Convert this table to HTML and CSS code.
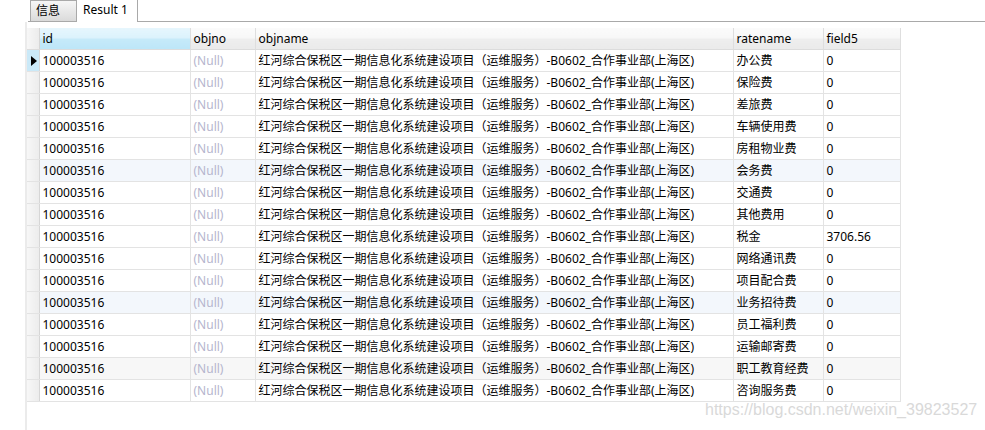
FILE: index.html
```html
<!DOCTYPE html>
<html>
<head>
<meta charset="utf-8">
<link rel="stylesheet" href="styles.css">
</head>
<body>
<div class="app">
  <div class="gutter"></div>
  <div class="main">
    <div class="tabbar">
      <div class="tab tab-info">信息</div>
      <div class="tab tab-active">Result 1</div>
    </div>
    <div class="pane">
      <table class="grid">
        <colgroup>
          <col class="c-ind"><col class="c-id"><col class="c-objno"><col class="c-objname"><col class="c-rate"><col class="c-f5">
        </colgroup>
        <thead>
          <tr>
            <th class="ind"></th>
            <th class="sel">id</th>
            <th>objno</th>
            <th>objname</th>
            <th>ratename</th>
            <th>field5</th>
          </tr>
        </thead>
        <tbody>
          <tr><td class="ind cur"><span class="tri"></span></td><td>100003516</td><td class="null">(Null)</td><td>红河综合保税区一期信息化系统建设项目（运维服务）-B0602_合作事业部(上海区)</td><td>办公费</td><td>0</td></tr>
          <tr><td class="ind"></td><td>100003516</td><td class="null">(Null)</td><td>红河综合保税区一期信息化系统建设项目（运维服务）-B0602_合作事业部(上海区)</td><td>保险费</td><td>0</td></tr>
          <tr><td class="ind"></td><td>100003516</td><td class="null">(Null)</td><td>红河综合保税区一期信息化系统建设项目（运维服务）-B0602_合作事业部(上海区)</td><td>差旅费</td><td>0</td></tr>
          <tr><td class="ind"></td><td>100003516</td><td class="null">(Null)</td><td>红河综合保税区一期信息化系统建设项目（运维服务）-B0602_合作事业部(上海区)</td><td>车辆使用费</td><td>0</td></tr>
          <tr><td class="ind"></td><td>100003516</td><td class="null">(Null)</td><td>红河综合保税区一期信息化系统建设项目（运维服务）-B0602_合作事业部(上海区)</td><td>房租物业费</td><td>0</td></tr>
          <tr class="tint"><td class="ind"></td><td>100003516</td><td class="null">(Null)</td><td>红河综合保税区一期信息化系统建设项目（运维服务）-B0602_合作事业部(上海区)</td><td>会务费</td><td>0</td></tr>
          <tr><td class="ind"></td><td>100003516</td><td class="null">(Null)</td><td>红河综合保税区一期信息化系统建设项目（运维服务）-B0602_合作事业部(上海区)</td><td>交通费</td><td>0</td></tr>
          <tr><td class="ind"></td><td>100003516</td><td class="null">(Null)</td><td>红河综合保税区一期信息化系统建设项目（运维服务）-B0602_合作事业部(上海区)</td><td>其他费用</td><td>0</td></tr>
          <tr><td class="ind"></td><td>100003516</td><td class="null">(Null)</td><td>红河综合保税区一期信息化系统建设项目（运维服务）-B0602_合作事业部(上海区)</td><td>税金</td><td>3706.56</td></tr>
          <tr><td class="ind"></td><td>100003516</td><td class="null">(Null)</td><td>红河综合保税区一期信息化系统建设项目（运维服务）-B0602_合作事业部(上海区)</td><td>网络通讯费</td><td>0</td></tr>
          <tr><td class="ind"></td><td>100003516</td><td class="null">(Null)</td><td>红河综合保税区一期信息化系统建设项目（运维服务）-B0602_合作事业部(上海区)</td><td>项目配合费</td><td>0</td></tr>
          <tr class="tint"><td class="ind"></td><td>100003516</td><td class="null">(Null)</td><td>红河综合保税区一期信息化系统建设项目（运维服务）-B0602_合作事业部(上海区)</td><td>业务招待费</td><td>0</td></tr>
          <tr><td class="ind"></td><td>100003516</td><td class="null">(Null)</td><td>红河综合保税区一期信息化系统建设项目（运维服务）-B0602_合作事业部(上海区)</td><td>员工福利费</td><td>0</td></tr>
          <tr><td class="ind"></td><td>100003516</td><td class="null">(Null)</td><td>红河综合保税区一期信息化系统建设项目（运维服务）-B0602_合作事业部(上海区)</td><td>运输邮寄费</td><td>0</td></tr>
          <tr class="grey"><td class="ind"></td><td>100003516</td><td class="null">(Null)</td><td>红河综合保税区一期信息化系统建设项目（运维服务）-B0602_合作事业部(上海区)</td><td>职工教育经费</td><td>0</td></tr>
          <tr><td class="ind"></td><td>100003516</td><td class="null">(Null)</td><td>红河综合保税区一期信息化系统建设项目（运维服务）-B0602_合作事业部(上海区)</td><td>咨询服务费</td><td>0</td></tr>
        </tbody>
      </table>
    </div>
  </div>
  <div class="watermark">https://blog.csdn.net/weixin_39823527</div>
</div>
</body>
</html>
```

FILE: styles.css
```css
html, body {
  margin: 0;
  padding: 0;
  background: #ffffff;
}
body {
  font-family: "Noto Sans", "Noto Sans CJK SC", sans-serif;
  font-size: 12px;
  color: #000;
}
.app {
  position: relative;
  display: flex;
  width: 985px;
  height: 430px;
  overflow: hidden;
}
.gutter {
  width: 25px;
  flex: none;
}
.main {
  flex: 1;
  display: flex;
  flex-direction: column;
}
.tabbar {
  height: 21px;
  border-bottom: 1px solid #a9a9a9;
  margin-left: 3px;
  display: flex;
  align-items: flex-end;
  padding-left: 2px;
}
.tab {
  box-sizing: border-box;
  line-height: 18px;
  font-size: 12px;
}
.tab-info {
  width: 47px;
  height: 21px;
  border: 1px solid #a9a9a9;
  border-bottom: none;
  background: linear-gradient(#f6f6f6, #dadada);
  padding-left: 5px;
  line-height: 20px;
}
.tab-active {
  width: 61px;
  height: 23px;
  margin-bottom: -1px;
  border: 1px solid #a9a9a9;
  border-left: none;
  border-bottom: none;
  background: #fff;
  padding-left: 6px;
  line-height: 20px;
}
.pane {
  flex: 1;
  border-left: 2px solid #ebebeb;
  padding-top: 6px;
}
.grid {
  border-collapse: collapse;
  table-layout: fixed;
  width: 873px;
}
.c-ind { width: 12px; }
.c-id { width: 151px; }
.c-objno { width: 65px; }
.c-objname { width: 478px; }
.c-rate { width: 90px; }
.c-f5 { width: 77px; }
.grid th, .grid td {
  height: 21px;
  padding: 0 0 0 3px;
  line-height: 21px;
  text-align: left;
  font-weight: normal;
  white-space: nowrap;
  overflow: hidden;
  border-right: 1px solid #e3e3e3;
  border-bottom: 1px solid #e3e3e3;
}
.grid th {
  background: linear-gradient(#fbfbfb 0%, #f7f7f7 45%, #eeeeee 55%, #eaeaea 100%);
  border-right: 1px solid #dedede;
  border-bottom: 1px solid #dcdcdc;
}
.grid th.sel {
  background: linear-gradient(#e6f6fd 0%, #dcf2fc 45%, #c5eaf9 55%, #bde6f8 100%);
}
.grid th.ind, .grid td.ind {
  padding: 0;
  border-right: 1px solid #d6d6d6;
  background: linear-gradient(90deg, #f7f7f7, #ececec);
}
.grid td.ind.cur {
  background: #cae9f8;
}
.tri {
  display: block;
  width: 0;
  height: 0;
  margin-left: 4px;
  border-top: 5px solid transparent;
  border-bottom: 5px solid transparent;
  border-left: 6px solid #000;
}
.grid td.null {
  color: #b5b5cd;
}
.grid tr.tint td {
  background: #f3f7fc;
}
.grid tr.grey td {
  background: #f7f7f7;
}
.grid tr.tint td.ind, .grid tr.grey td.ind {
  background: linear-gradient(90deg, #f7f7f7, #ececec);
}
.watermark {
  position: absolute;
  left: 705px;
  top: 401px;
  font-family: "Liberation Sans", Arial, sans-serif;
  font-size: 16px;
  color: #d9d9d9;
  white-space: nowrap;
}
```
